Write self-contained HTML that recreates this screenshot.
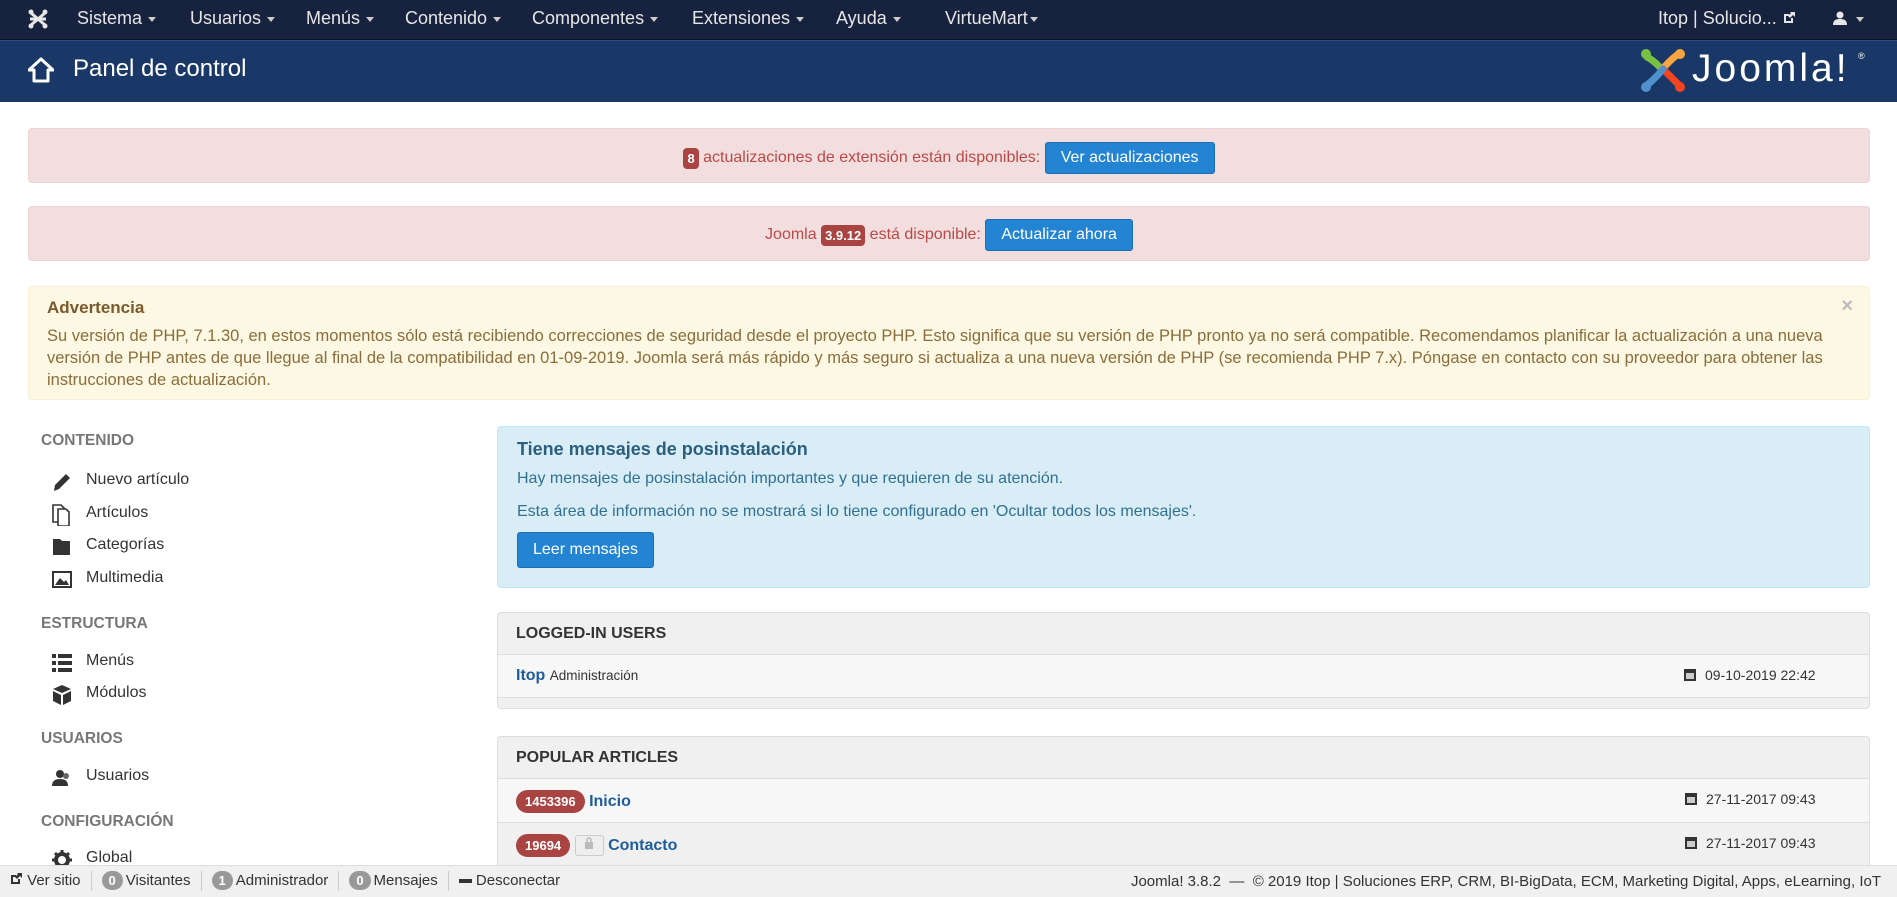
<!DOCTYPE html>
<html><head><meta charset="utf-8">
<style>
*{box-sizing:border-box;margin:0;padding:0}
body{width:1897px;height:897px;overflow:hidden;font-family:"Liberation Sans",Arial,sans-serif;font-size:16px;color:#333;background:#fff;position:relative}
.abs{position:absolute}
#top{left:0;top:0;width:1897px;height:40px;background:#17223f;border-bottom:1px solid #0d1424}
#top span.n{position:absolute;top:8px;color:#e6e6e6;font-size:18px}
.caret{display:inline-block;width:0;height:0;border-left:4px solid transparent;border-right:4px solid transparent;border-top:5px solid #ccc;vertical-align:middle;margin-left:6px}
#hdr{left:0;top:40px;width:1897px;height:62px;background:#1a3867;border-top:1px solid #2d4e80}
.alert{position:absolute;left:28px;width:1842px;border-radius:4px}
.red{background:#f2dede;border:1px solid #eed3d7;color:#b94a48;text-align:center}
.badge{display:inline-block;background:#a94442;color:#fff;font-weight:bold;font-size:13px;border-radius:4px;padding:3px 4px;vertical-align:middle}
.btn{display:inline-block;background:#2384d3;color:#fff;border:1px solid #1d6fb3;border-radius:3px;font-size:16px;vertical-align:middle}
.side{position:absolute;left:41px;font-size:16px;color:#333}
.sh{position:absolute;left:41px;font-size:15.5px;font-weight:bold;color:#777}
.side svg{position:absolute;left:10px;top:0}
.side span{position:absolute;left:45px;top:0;white-space:nowrap}
.panel{position:absolute;left:497px;width:1373px;border:1px solid #ddd;border-radius:4px;background:#f0f0f0}
.ph{height:42px;padding:12px 18px;font-weight:bold;font-size:16px;color:#333;border-bottom:1px solid #ddd}
.row{position:absolute;left:0;width:100%;background:#f7f7f7;border-bottom:1px solid #ddd}
a{color:#1f5c9a;text-decoration:none;font-weight:bold}
.pill{display:inline-block;background:#a94442;color:#fff;font-weight:bold;font-size:13px;border-radius:12px;padding:4px 9px}
#foot{left:0;top:865px;width:1897px;height:32px;background:#f0f0f0;border-top:1px solid #ddd;font-size:15px;color:#333}
#foot .g{display:inline-block;background:#999;color:#fff;border-radius:10px;font-size:13px;font-weight:bold;padding:2px 7px;margin-right:3px}
.sep{display:inline-block;width:1px;height:20px;background:#ccc;vertical-align:middle;margin:0 10px}
</style></head><body>
<div id="top" class="abs">
 <svg class="abs" style="left:27px;top:8px" width="22" height="22" viewBox="0 0 22 22"><g fill="none" stroke="#e6e6e6" stroke-width="3"><path d="M4 5 L18 17 M18 5 L4 17 M3 11 H19"/><circle cx="4" cy="4" r="2.5" fill="#e6e6e6" stroke="none"/><circle cx="18" cy="4" r="2.5" fill="#e6e6e6" stroke="none"/><circle cx="4" cy="18" r="2.5" fill="#e6e6e6" stroke="none"/><circle cx="18" cy="18" r="2.5" fill="#e6e6e6" stroke="none"/></g></svg>
 <span class="n" style="left:77px">Sistema<i class="caret"></i></span>
 <span class="n" style="left:190px">Usuarios<i class="caret"></i></span>
 <span class="n" style="left:306px">Menús<i class="caret"></i></span>
 <span class="n" style="left:405px">Contenido<i class="caret"></i></span>
 <span class="n" style="left:532px">Componentes<i class="caret"></i></span>
 <span class="n" style="left:692px">Extensiones<i class="caret"></i></span>
 <span class="n" style="left:836px">Ayuda<i class="caret"></i></span>
 <span class="n" style="left:945px">VirtueMart<i class="caret" style="margin-left:2px"></i></span>
 <span class="n" style="left:1658px">Itop | Solucio... <svg width="14" height="14" viewBox="0 0 14 14" style="vertical-align:-1px"><path d="M2 3h5v2H4v5h5V7h2v5H2z M8 1h5v5l-2-2-3 3-2-2 3-3z" fill="#e6e6e6"/></svg></span>
 <span class="n" style="left:1832px"><svg width="16" height="16" viewBox="0 0 16 16" style="vertical-align:-2px"><circle cx="8" cy="5" r="3.5" fill="#e6e6e6"/><path d="M1 15c0-5 3-6 7-6s7 1 7 6z" fill="#e6e6e6"/></svg><i class="caret" style="margin-left:8px"></i></span>
</div>
<div id="hdr" class="abs">
 <svg class="abs" style="left:28px;top:16px" width="26" height="26" viewBox="0 0 26 26"><path d="M13 2 L25 13 H20 V24 H6 V13 H1 Z" fill="none" stroke="#fff" stroke-width="3" stroke-linejoin="round"/></svg>
 <div class="abs" style="left:73px;top:14px;color:#fff;font-size:24px">Panel de control</div>
 <svg class="abs" style="left:1639px;top:6px" width="48" height="46" viewBox="0 0 48 46">
  <g stroke-width="7" fill="none" stroke-linecap="round">
  <path d="M8 10 Q16 14 24 24" stroke="#7ac143"/><path d="M38 8 Q30 14 22 24" stroke="#f9a541"/>
  <path d="M40 38 Q32 30 24 22" stroke="#f44321"/><path d="M8 38 Q16 32 24 22" stroke="#5091cd"/></g>
  <circle cx="7" cy="7" r="5" fill="#7ac143"/><circle cx="41" cy="7" r="5" fill="#f9a541"/><circle cx="41" cy="40" r="5" fill="#f44321"/><circle cx="7" cy="40" r="5" fill="#5091cd"/>
 </svg>
 <div class="abs" style="left:1692px;top:6px;color:#fff;font-size:39px;letter-spacing:3px">Joomla!</div>
 <div class="abs" style="left:1858px;top:10px;color:#fff;font-size:9px">®</div>
</div>

<div class="alert red" style="top:128px;height:55px;padding-top:13px">
 <span class="badge">8</span> actualizaciones de extensión están disponibles: <span class="btn" style="padding:6px 15px">Ver actualizaciones</span>
</div>
<div class="alert red" style="top:206px;height:55px;padding-top:12px">
 Joomla <span class="badge">3.9.12</span> está disponible: <span class="btn" style="padding:6px 15px">Actualizar ahora</span>
</div>
<div class="alert" style="top:286px;height:114px;background:#fcf8e3;border:1px solid #fbeed5;color:#8a6d3b;padding:10px 18px;line-height:22px">
 <div style="font-weight:bold;font-size:17px;margin-bottom:6px;color:#7a5a2b">Advertencia</div>
 <div style="font-size:16.5px">Su versión de PHP, 7.1.30, en estos momentos sólo está recibiendo correcciones de seguridad desde el proyecto PHP. Esto significa que su versión de PHP pronto ya no será compatible. Recomendamos planificar la actualización a una nueva versión de PHP antes de que llegue al final de la compatibilidad en 01-09-2019. Joomla será más rápido y más seguro si actualiza a una nueva versión de PHP (se recomienda PHP 7.x). Póngase en contacto con su proveedor para obtener las instrucciones de actualización.</div>
 <div class="abs" style="right:16px;top:8px;color:#bbb;font-size:20px;font-weight:bold">×</div>
</div>

<div class="sh" style="top:432px">CONTENIDO</div>
<div class="side" style="top:471px"><svg width="22" height="22" viewBox="0 0 22 22"><path d="M3 20 L4 14 L15 3 L19 7 L8 18 Z" fill="#333"/></svg><span>Nuevo artículo</span></div>
<div class="side" style="top:504px"><svg width="22" height="22" viewBox="0 0 22 22"><path d="M2 1h8l3 3v14H2z" fill="none" stroke="#333" stroke-width="1.6"/><path d="M7 5h8l3 3v14H7z" fill="#fff" stroke="#333" stroke-width="1.6"/></svg><span>Artículos</span></div>
<div class="side" style="top:536px"><svg width="22" height="22" viewBox="0 0 22 22"><path d="M2 3h7l2 2h8v14H2z" fill="#333"/></svg><span>Categorías</span></div>
<div class="side" style="top:569px"><svg width="22" height="22" viewBox="0 0 22 22"><rect x="2" y="3" width="18" height="15" fill="none" stroke="#333" stroke-width="2"/><path d="M4 16 L9 9 L13 13 L15 11 L18 16z" fill="#333"/></svg><span>Multimedia</span></div>
<div class="sh" style="top:615px">ESTRUCTURA</div>
<div class="side" style="top:652px"><svg width="22" height="22" viewBox="0 0 22 22"><g fill="#333"><rect x="1" y="2" width="4" height="4"/><rect x="7" y="2" width="14" height="4"/><rect x="1" y="9" width="4" height="4"/><rect x="7" y="9" width="14" height="4"/><rect x="1" y="16" width="4" height="4"/><rect x="7" y="16" width="14" height="4"/></g></svg><span>Menús</span></div>
<div class="side" style="top:684px"><svg width="22" height="22" viewBox="0 0 22 22"><path d="M11 1 L20 5 L11 9 L2 5z M2 7 L10 11 V21 L2 17z M12 11 L20 7 V17 L12 21z" fill="#333"/></svg><span>Módulos</span></div>
<div class="sh" style="top:730px">USUARIOS</div>
<div class="side" style="top:767px"><svg width="22" height="22" viewBox="0 0 22 22"><circle cx="9" cy="7" r="4" fill="#333"/><path d="M1 19c0-5 3-7 8-7s8 2 8 7z" fill="#333"/><circle cx="15" cy="9" r="3" fill="#666"/></svg><span>Usuarios</span></div>
<div class="sh" style="top:813px">CONFIGURACIÓN</div>
<div class="side" style="top:849px"><svg width="22" height="22" viewBox="0 0 22 22"><circle cx="11" cy="11" r="6" fill="none" stroke="#333" stroke-width="4"/><g stroke="#333" stroke-width="3"><path d="M11 1v4M11 17v4M1 11h4M17 11h4M4 4l3 3M15 15l3 3M18 4l-3 3M4 18l3-3"/></g></svg><span>Global</span></div>

<div class="abs" style="left:497px;top:426px;width:1373px;height:162px;background:#d9edf7;border:1px solid #bce8f1;border-radius:4px;color:#31708f;padding:0 19px">
 <div style="font-weight:bold;font-size:18px;margin-top:12px;color:#2b5f7e">Tiene mensajes de posinstalación</div>
 <div style="margin-top:10px">Hay mensajes de posinstalación importantes y que requieren de su atención.</div>
 <div style="margin-top:15px">Esta área de información no se mostrará si lo tiene configurado en 'Ocultar todos los mensajes'.</div>
 <div class="btn" style="margin-top:11px;padding:8px 15px">Leer mensajes</div>
</div>

<div class="panel" style="top:612px;height:97px">
 <div class="ph">LOGGED-IN USERS</div>
 <div class="row" style="top:42px;height:43px;padding:12px 18px"><a>Itop</a> <span style="font-size:13.5px;color:#333">Administración</span>
  <span class="abs" style="left:1185px;top:12px;font-size:14px"><svg width="14" height="14" viewBox="0 0 14 14" style="vertical-align:-2px;margin-right:8px"><rect x="1" y="1" width="12" height="12" fill="#333"/><rect x="3" y="5" width="8" height="6" fill="#ccc"/></svg>09-10-2019 22:42</span></div>
</div>
<div class="panel" style="top:736px;height:140px">
 <div class="ph">POPULAR ARTICLES</div>
 <div class="row" style="top:42px;height:44px;padding:11px 18px"><span class="pill">1453396</span> <a>Inicio</a>
  <span class="abs" style="left:1186px;top:12px;font-size:14px"><svg width="14" height="14" viewBox="0 0 14 14" style="vertical-align:-2px;margin-right:8px"><rect x="1" y="1" width="12" height="12" fill="#333"/><rect x="3" y="5" width="8" height="6" fill="#ccc"/></svg>27-11-2017 09:43</span></div>
 <div class="row" style="top:86px;height:44px;padding:11px 18px;background:#f0f0f0"><span class="pill">19694</span> <span style="display:inline-block;width:29px;height:21px;border:1px solid #ccc;border-radius:3px;background:#eee;vertical-align:middle;text-align:center"><svg width="10" height="12" viewBox="0 0 10 12"><rect x="1" y="5" width="8" height="7" fill="#bbb"/><path d="M3 5V3a2 2 0 014 0v2" fill="none" stroke="#bbb" stroke-width="1.5"/></svg></span> <a>Contacto</a>
  <span class="abs" style="left:1186px;top:12px;font-size:14px"><svg width="14" height="14" viewBox="0 0 14 14" style="vertical-align:-2px;margin-right:8px"><rect x="1" y="1" width="12" height="12" fill="#333"/><rect x="3" y="5" width="8" height="6" fill="#ccc"/></svg>27-11-2017 09:43</span></div>
</div>

<div id="foot" class="abs">
 <div class="abs" style="left:9px;top:5px;white-space:nowrap">
  <svg width="14" height="14" viewBox="0 0 14 14" style="vertical-align:-1px"><path d="M2 3h5v2H4v5h5V7h2v5H2z M8 1h5v5l-2-2-3 3-2-2 3-3z" fill="#333"/></svg> Ver sitio<i class="sep"></i><span class="g">0</span>Visitantes<i class="sep"></i><span class="g">1</span>Administrador<i class="sep"></i><span class="g">0</span>Mensajes<i class="sep"></i><span style="display:inline-block;width:13px;height:4px;background:#333;vertical-align:middle"></span> Desconectar
 </div>
 <div class="abs" style="right:16px;top:7px;white-space:nowrap">Joomla! 3.8.2 &nbsp;— &nbsp;© 2019 Itop | Soluciones ERP, CRM, BI-BigData, ECM, Marketing Digital, Apps, eLearning, IoT</div>
</div>
</body></html>
